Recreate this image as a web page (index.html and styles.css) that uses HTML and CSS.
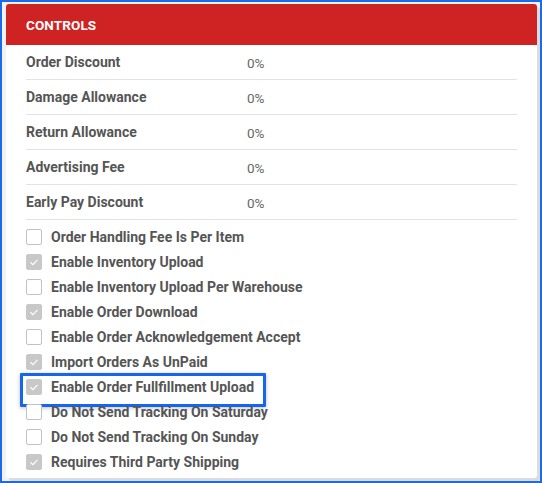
FILE: index.html
```html
<!DOCTYPE html>
<html>
<head>
<meta charset="utf-8">
<link rel="stylesheet" href="styles.css">
</head>
<body>
<div class="frame">
  <div class="card">
    <div class="card-header">CONTROLS</div>
    <div class="card-body">
      <div class="field"><span class="label">Order Discount</span><span class="value">0%</span></div>
      <div class="field"><span class="label">Damage Allowance</span><span class="value">0%</span></div>
      <div class="field"><span class="label">Return Allowance</span><span class="value">0%</span></div>
      <div class="field"><span class="label">Advertising Fee</span><span class="value">0%</span></div>
      <div class="field"><span class="label">Early Pay Discount</span><span class="value">0%</span></div>
      <ul class="checks">
        <li class="check"><span class="box"></span>Order Handling Fee Is Per Item</li>
        <li class="check on"><span class="box"><svg viewBox="0 0 16 16"><path d="M4 8.3 L6.8 11 L12 5.5"/></svg></span>Enable Inventory Upload</li>
        <li class="check"><span class="box"></span>Enable Inventory Upload Per Warehouse</li>
        <li class="check on"><span class="box"><svg viewBox="0 0 16 16"><path d="M4 8.3 L6.8 11 L12 5.5"/></svg></span>Enable Order Download</li>
        <li class="check"><span class="box"></span>Enable Order Acknowledgement Accept</li>
        <li class="check on"><span class="box"><svg viewBox="0 0 16 16"><path d="M4 8.3 L6.8 11 L12 5.5"/></svg></span>Import Orders As UnPaid</li>
        <li class="check on highlight"><span class="box"><svg viewBox="0 0 16 16"><path d="M4 8.3 L6.8 11 L12 5.5"/></svg></span>Enable Order Fullfillment Upload</li>
        <li class="check"><span class="box"></span>Do Not Send Tracking On Saturday</li>
        <li class="check"><span class="box"></span>Do Not Send Tracking On Sunday</li>
        <li class="check on"><span class="box"><svg viewBox="0 0 16 16"><path d="M4 8.3 L6.8 11 L12 5.5"/></svg></span>Requires Third Party Shipping</li>
      </ul>
    </div>
  </div>
</div>
</body>
</html>
```
FILE: styles.css
```css
* { box-sizing: border-box; }
html, body { margin: 0; padding: 0; }
body {
  font-family: Roboto, "Liberation Sans", Arial, sans-serif;
  background: #f2f2f2;
}
.frame {
  width: 542px;
  height: 483px;
  border: 2px solid #1a6ae9;
  background: #f2f2f2;
  padding: 2px 3px 0 4px;
}
.card {
  width: 531px;
  height: 474px;
  background: #fff;
  border-radius: 3px;
  box-shadow: 3px 3px 0 #dcdcdc;
  overflow: hidden;
}
.card-header {
  height: 41px;
  background: #cf2323;
  color: #fff;
  font-weight: 700;
  font-size: 13.5px;
  padding-left: 20px;
  display: flex;
  align-items: center;
  letter-spacing: 0.1px;
}
.card-body {
  padding: 0 20px 0 20px;
}
.field {
  height: 35px;
  display: flex;
  align-items: center;
  border-bottom: 1px solid #e3e3e3;
  padding-bottom: 1px;
}
.label {
  width: 221px;
  font-weight: 700;
  font-size: 14px;
  color: #555;
}
.value {
  font-size: 13.5px;
  color: #666;
  padding-top: 2px;
}
.checks {
  list-style: none;
  margin: 0;
  padding: 4px 0 0 0;
}
.check {
  height: 25px;
  display: flex;
  align-items: center;
  font-weight: 700;
  font-size: 14px;
  color: #555;
  position: relative;
}
.box {
  width: 16px;
  height: 16px;
  border: 1px solid #c2c2c2;
  border-radius: 2px;
  background: #fff;
  margin-right: 9px;
  display: flex;
  align-items: center;
  justify-content: center;
  flex: none;
}
.check.on .box {
  background: #c8c8c8;
  border-color: #c8c8c8;
}
.box svg {
  width: 16px;
  height: 16px;
  fill: none;
  stroke: #fff;
  stroke-width: 1.3;
}
.highlight::after {
  content: "";
  position: absolute;
  left: -6px;
  top: -1px;
  width: 240px;
  height: 28px;
  border: 3px solid #1565ef;
  border-radius: 1px;
  box-shadow: 0 1px 4px rgba(0,0,0,0.25);
}
```
